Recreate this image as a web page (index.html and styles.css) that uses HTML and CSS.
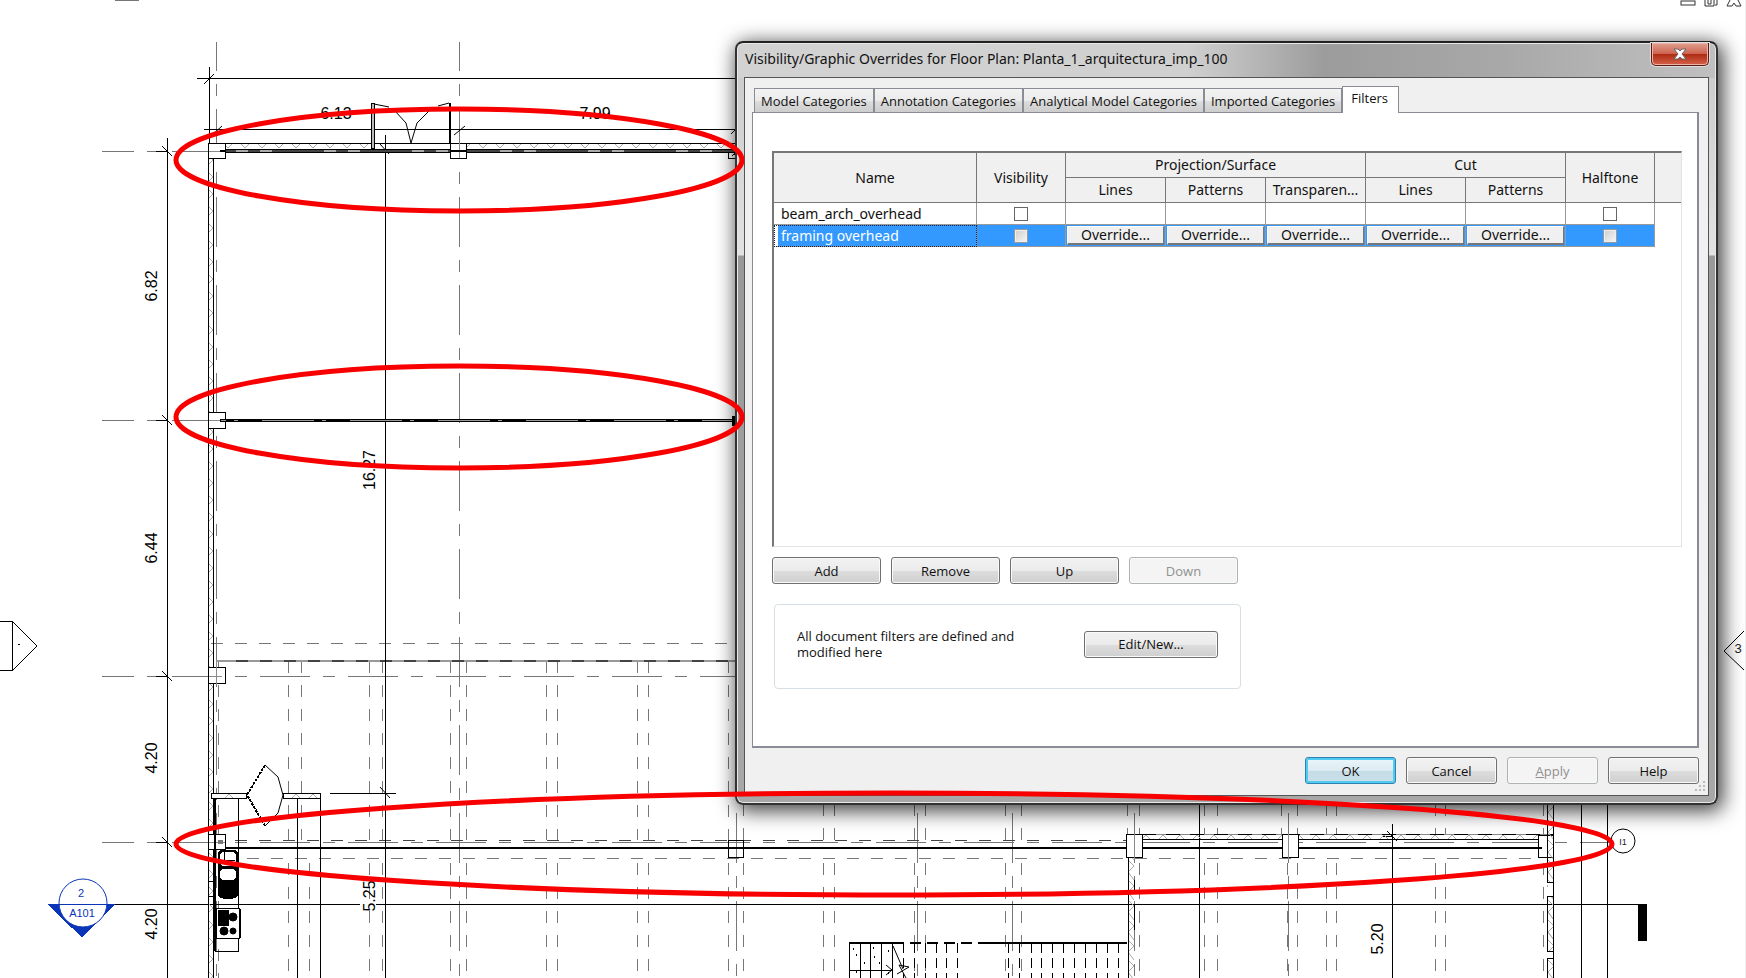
FILE: index.html
```html
<!DOCTYPE html>
<html lang="en">
<head>
    <meta charset="UTF-8">
    <meta name="viewport" content="width=device-width, initial-scale=1.0">
    <title>Visibility/Graphic Overrides</title>
    <link rel="stylesheet" href="styles.css">
</head>
<body>
    <main class="workspace">
        <!-- Floor plan -->
        <svg class="plan" role="img" aria-label="Floor plan">
            <defs>
                <pattern id="hatch-v" width="6" height="17" patternUnits="userSpaceOnUse" x="208" y="0">
                    <path d="M1 3 L5 7 L1 11" class="hatch"/>
                </pattern>
                <pattern id="hatch-h" width="17" height="6" patternUnits="userSpaceOnUse" x="0" y="143">
                    <path d="M3 1 L7 5 L11 1" class="hatch"/>
                </pattern>
                <pattern id="hatch-beam" width="17" height="6" patternUnits="userSpaceOnUse" x="0" y="834">
                    <path d="M3 5 L7 1 L11 5" class="hatch"/>
                </pattern>
                <pattern id="hatch-zig" width="6" height="20" patternUnits="userSpaceOnUse" x="1128" y="0">
                    <path d="M0 0 L6 6 L0 12 L6 20" class="hatch"/>
                </pattern>
            </defs>

            <!-- grid lines -->
            <g class="grid">
                <path class="solid" d="M115 .5H139"/>
                <path class="grid-v" d="M216.5 42V978 M459.5 42V978"/>
                <path class="grid-v2" d="M736.5 813V978 M917.5 813V978 M1012.5 813V978 M1134.5 813V978 M1288.5 813V978"/>
                <path class="grid-h" d="M102 151.5H222 M102 420.5H222 M102 676.5H736 M102 842.5H1612"/>
            </g>

            <!-- beams below, dashed -->
            <g class="dashed">
                <path d="M211 643.5H736"/>
                <path d="M288.5 661V840 M301.5 661V840 M369.5 661V840 M382.5 661V840 M450.5 661V840 M466.5 661V840 M546.5 661V840 M557.5 661V840 M637.5 661V840 M648.5 661V840 M728.5 661V840 M218.5 661V978"/>
                <path d="M743.5 804V840 M823.5 804V840 M834.5 804V840 M914.5 804V840 M925.5 804V840 M1005.5 804V840 M1021.5 804V840 M1127.5 804V840 M1139.5 804V840 M1204.5 804V834 M1217.5 804V834 M1281.5 804V834 M1297.5 804V834 M1326.5 804V834 M1336.5 804V834 M1435.5 804V834 M1445.5 804V834 M1543.5 804V834"/>
                <path class="lower" d="M288.5 858V978 M309.5 858V978 M369.5 858V978 M382.5 858V978 M450.5 858V978 M466.5 858V978 M546.5 858V978 M557.5 858V978 M637.5 858V978 M648.5 858V978 M728.5 858V978 M743.5 858V978 M823.5 858V978 M834.5 858V978 M914.5 858V978 M925.5 858V978 M1005.5 858V978 M1021.5 858V978 M1139.5 858V978 M1204.5 858V978 M1217.5 858V978 M1287.5 858V978 M1297.5 858V978 M1326.5 858V978 M1336.5 858V978 M1435.5 858V978 M1445.5 858V978 M1543.5 858V978"/>
                <path d="M223 858.5H1538"/>
                <path d="M235 840.5H1126" class="dark"/>
            </g>
            <path class="grid-solid" d="M216 661H736"/>
            <path class="dash-dark" d="M236 661H736"/>

            <!-- dimension lines -->
            <g class="line">
                <path d="M167.5 138V978 M197 78.5H736 M204 129.5H736 M209.5 67V144 M385.5 135V978 M330 793.5H396"/>
                <path d="M156 151.5H168 M156 420.5H168 M156 676.5H168 M156 842.5H168"/>
                <path d="M1392.5 824V978 M1382 836.5H1393 M1199.5 803V978 M1581.5 803V978 M1607.5 803V978"/>
                <path d="M115 904.5H1639"/>
            </g>
            <g class="tick">
                <path d="M162 146L172 156 M162 415L172 425 M162 671L172 681 M162 837L172 847"/>
                <path d="M204 84L214 74 M212 135L222 126 M454 135L465 126 M731 134L736 129 M380 144L389 154 M380 787L390 798 M1387 831L1397 841"/>
            </g>

            <!-- outer walls -->
            <g class="line">
                <rect x="208" y="158" width="6" height="820" fill="url(#hatch-v)" stroke="none"/>
                <path d="M208.5 143V978 M213.5 158V978"/>
                <rect x="226" y="143" width="146" height="6" fill="url(#hatch-h)" stroke="none"/>
                <rect x="467" y="143" width="262" height="6" fill="url(#hatch-h)" stroke="none"/>
                <path d="M208 143.5H736"/>
                <rect x="225.5" y="149.5" width="511" height="3" class="beam"/>
                <path class="beam-mid" d="M236 151H736"/>
                <rect x="208.5" y="143.5" width="17" height="15" class="column"/>
                <rect x="450.5" y="143.5" width="16" height="15" class="column"/>
                <path d="M728.5 152V158.5H736 M732 156L736 153" />
                <path d="M459.5 143V158 M209 151.5H222" class="gray"/>
                <path d="M450 151H467 M220 151H226" class="thick"/>
            </g>

            <!-- double door -->
            <g class="line">
                <rect x="371.5" y="103.5" width="3" height="45" fill="#bbb"/>
                <path d="M450 103V144" class="thick"/>
                <path class="arc" d="M374 104L389 107 M395 111L406 123L411 143L417 123L429 111 M438 106L449 103"/>
            </g>

            <!-- middle beam -->
            <g class="line">
                <rect x="208.5" y="412.5" width="17" height="16" class="column"/>
                <path d="M209 420.5H222" class="gray"/>
                <rect x="220.5" y="419.5" width="516" height="2" class="beam-light"/>
                <path class="beam-dash" d="M226 420.5H736"/>
                <rect x="732" y="416" width="4" height="9" class="fill"/>
                <rect x="208.5" y="667.5" width="17" height="16" class="column"/>
                <path d="M209 676.5H222 M216.5 661V684" class="gray"/>
                <rect x="208.5" y="834.5" width="17" height="15" class="column"/>
                <path d="M209 842.5H225" class="gray"/>
                <rect x="218" y="840" width="5" height="4" fill="#777" stroke="none"/>
            </g>

            <!-- lower beam -->
            <g class="line">
                <path d="M225 848H1126 M1142 848H1542" class="thick"/>
                <path d="M728 840.5H744 M728.5 840V858 M743.5 840V858 M728 857.5H744"/>
                <rect x="1142" y="834" width="396" height="6" fill="url(#hatch-beam)" stroke="none"/>
                <path d="M1142 834.5H1553" class="gray"/>
                <path d="M1142 834.5H1553" class="long-dash"/>
                <path d="M1142 839.5H1538"/>
                <rect x="1126.5" y="834.5" width="16" height="23" class="column"/>
                <rect x="1282.5" y="834.5" width="16" height="23" class="column"/>
                <rect x="1538.5" y="835.5" width="15" height="22" class="column"/>
                <path d="M1288.5 834V860 M1134.5 834V860" class="gray"/>
                <path d="M1538 848H1542" class="thick"/>
                <rect x="1128" y="858" width="6" height="120" fill="url(#hatch-zig)" stroke="none"/>
                <path d="M1128.5 858V978 M1134.5 880V890 M1134.5 905V930"/>
                <rect x="1547" y="803" width="6" height="175" fill="url(#hatch-zig)" stroke="none"/>
                <path d="M1547.5 803V882.5H1553 M1547.5 978V958.5H1553 M1553.5 803V978"/>
                <rect x="1547.5" y="896.5" width="6" height="55" fill="url(#hatch-zig)"/>
                <rect x="1548" y="883" width="5" height="13" class="blank"/>
                <rect x="1548" y="952" width="5" height="6" class="blank"/>
            </g>
            <rect x="1638" y="904" width="9" height="37" class="fill"/>

            <!-- stair -->
            <g class="line">
                <path d="M849 943H893 M988 943H1127" class="thick"/>
                <path d="M893 943H988" class="thick stair-dash"/>
                <path d="M849.5 943V978 M860.5 943V978 M870.5 943V978 M881.5 943V978 M892.5 943V978 M849 970.5H892"/>
                <path class="tick" d="M886 965L892 970L886 975 M893 946L903 969 M897 974L909 967L899 965L906 978"/>
                <path class="stair-v" d="M903.5 943V978 M914.5 943V978 M925.5 943V978 M936.5 943V978 M946.5 943V978 M957.5 943V978 M1008.5 943V978 M1019.5 943V978 M1031.5 943V978 M1041.5 943V978 M1052.5 943V978 M1063.5 943V978 M1074.5 943V978 M1085.5 943V978 M1096.5 943V978 M1107.5 943V978 M1118.5 943V978"/>
                <path class="dots" d="M853 949h1M856 955h1M864 963h1M856 972h1M873 948h1M874 957h1M888 951h1M879 963h1M888 973h1"/>
            </g>

            <!-- kitchen -->
            <g class="line">
                <path d="M238.5 798V951.5H215 M297.5 798V978 M320.5 793V978"/>
                <path d="M215 798V951" class="thick"/>
                <rect x="211.5" y="793.5" width="35" height="5" fill="#fff"/>
                <rect x="283.5" y="793.5" width="37" height="5" fill="#fff"/>
                <path class="hatch" d="M225 798L229 794L233 798 M292 798L296 794L300 798 M309 798L313 794L317 798"/>
                <path class="swing thick" d="M265 765L247 795L265 826"/>
                <path class="arc" d="M265 765L278 777L283 795L278 813L265 826"/>
                <rect x="218" y="850" width="20" height="48" rx="5" class="fill"/>
                <rect x="220" y="852" width="16" height="14" rx="4" fill="#fff" stroke="none"/>
                <rect x="220" y="869" width="16" height="11" rx="4" fill="#fff" stroke="none"/>
                <path d="M222 860.5H235 M224.5 852V864"/>
                <rect x="216.5" y="908.5" width="23" height="30" fill="#fff"/>
                <path d="M240 909V938" class="thick"/>
                <rect x="218" y="910" width="10" height="15" class="fill"/>
                <circle cx="233" cy="917" r="4" class="fill"/>
                <circle cx="224" cy="931" r="4" class="fill"/>
                <circle cx="233" cy="931" r="3" class="fill"/>
                <path d="M209 849.5H214 M209 881.5H214 M209 896.5H214"/>
            </g>

            <!-- dimension texts -->
            <g class="dim">
                <text x="336" y="119">6.13</text>
                <text x="595" y="119">7.99</text>
                <text transform="translate(157 286) rotate(-90)">6.82</text>
                <text transform="translate(157 548) rotate(-90)">6.44</text>
                <text transform="translate(157 758) rotate(-90)">4.20</text>
                <text transform="translate(157 924) rotate(-90)">4.20</text>
                <text transform="translate(375 470) rotate(-90)">16.27</text>
                <rect x="360" y="902" width="16" height="5" class="blank"/>
                <text transform="translate(375 896) rotate(-90)">5.25</text>
                <text transform="translate(1383 939) rotate(-90)">5.20</text>
            </g>

            <!-- view markers -->
            <g class="marker">
                <path d="M0 621.5H12.5V670.5H0 M12 621L37 646L12 671 M18 644.5h2"/>
                <path d="M1744 631L1724 651L1744 670"/>
                <text x="1738" y="653" class="elevation">3</text>
                <circle cx="1623" cy="841" r="12" fill="#fff"/>
                <text x="1623" y="845" class="bubble">I1</text>
            </g>
            <g class="section">
                <path d="M48 904H115L82 937Z" class="section-fill"/>
                <circle cx="83" cy="903" r="24"/>
                <path d="M48 904H115"/>
                <text x="81" y="897">2</text>
                <text x="82" y="917">A101</text>
            </g>
        </svg>

        <div class="mdi-controls">
            <button type="button" aria-label="Minimize">
                <svg width="16" height="7"><rect x="1" y="1" width="14" height="4"/></svg>
            </button>
            <button type="button" aria-label="Restore">
                <svg width="16" height="7"><path d="M2 0V6H11V0 M5 0V4H8V0 M12 5H14V0"/></svg>
            </button>
            <button type="button" aria-label="Close">
                <svg width="16" height="7"><path d="M4 0L1 6H6L8 3L10 6H15L12 0"/></svg>
            </button>
        </div>

        <section class="dialog" role="dialog" aria-labelledby="dialog-title">
            <header class="title-bar">
                <h1 id="dialog-title">Visibility/Graphic Overrides for Floor Plan: Planta_1_arquitectura_imp_100</h1>
                <button type="button" class="close" aria-label="Close dialog">
                    <svg width="14" height="12" viewBox="0 0 14 12"><path d="M1 1H5L7 3L9 1H13L9 6L13 11H9L7 9L5 11H1L5 6Z"/></svg>
                </button>
            </header>

            <div class="dialog-body">
                <div class="tabs" role="tablist">
                    <button type="button" role="tab" class="tab">Model Categories</button>
                    <button type="button" role="tab" class="tab">Annotation Categories</button>
                    <button type="button" role="tab" class="tab">Analytical Model Categories</button>
                    <button type="button" role="tab" class="tab">Imported Categories</button>
                    <button type="button" role="tab" class="tab active" aria-selected="true">Filters</button>
                </div>

                <div class="tab-page" role="tabpanel">
                    <div class="table-frame">
                        <table>
                            <colgroup>
                                <col class="col-name">
                                <col class="col-check">
                                <col class="col-override" span="5">
                                <col class="col-check">
                                <col>
                            </colgroup>
                            <thead>
                                <tr>
                                    <th rowspan="2">Name</th>
                                    <th rowspan="2">Visibility</th>
                                    <th colspan="3">Projection/Surface</th>
                                    <th colspan="2">Cut</th>
                                    <th rowspan="2">Halftone</th>
                                    <td rowspan="2" class="rest"></td>
                                </tr>
                                <tr>
                                    <th>Lines</th>
                                    <th>Patterns</th>
                                    <th>Transparen...</th>
                                    <th>Lines</th>
                                    <th>Patterns</th>
                                </tr>
                            </thead>
                            <tbody>
                                <tr>
                                    <td class="name">beam_arch_overhead</td>
                                    <td><input type="checkbox" aria-label="beam_arch_overhead visibility"></td>
                                    <td></td>
                                    <td></td>
                                    <td></td>
                                    <td></td>
                                    <td></td>
                                    <td><input type="checkbox" aria-label="beam_arch_overhead halftone"></td>
                                    <td class="rest"></td>
                                </tr>
                                <tr class="selected">
                                    <td class="name">framing overhead</td>
                                    <td><input type="checkbox" aria-label="framing overhead visibility"></td>
                                    <td><button type="button" class="override">Override...</button></td>
                                    <td><button type="button" class="override">Override...</button></td>
                                    <td><button type="button" class="override">Override...</button></td>
                                    <td><button type="button" class="override">Override...</button></td>
                                    <td><button type="button" class="override">Override...</button></td>
                                    <td><input type="checkbox" aria-label="framing overhead halftone"></td>
                                    <td class="rest"></td>
                                </tr>
                            </tbody>
                        </table>
                    </div>

                    <div class="list-actions">
                        <button type="button" class="btn">Add</button>
                        <button type="button" class="btn">Remove</button>
                        <button type="button" class="btn">Up</button>
                        <button type="button" class="btn" disabled>Down</button>
                    </div>

                    <div class="group">
                        <p>All document filters are defined and modified here</p>
                        <button type="button" class="btn">Edit/New...</button>
                    </div>
                </div>

                <footer class="dialog-actions">
                    <button type="button" class="btn default">OK</button>
                    <button type="button" class="btn">Cancel</button>
                    <button type="button" class="btn" disabled><u>A</u>pply</button>
                    <button type="button" class="btn">Help</button>
                </footer>
                <svg class="grip" width="12" height="12"><path d="M9 1h2M5 5h2M9 5h2M1 9h2M5 9h2M9 9h2"/></svg>
            </div>
        </section>

        <!-- red highlights over the plan and the dialog -->
        <svg class="highlights" aria-hidden="true">
            <ellipse cx="459" cy="160" rx="283" ry="51"/>
            <ellipse cx="459" cy="417" rx="283" ry="51"/>
            <ellipse cx="894" cy="844" rx="718" ry="51"/>
        </svg>
    </main>
</body>
</html>
```
FILE: styles.css
```css
* {
    box-sizing: border-box;
}
body {
    margin: 0;
    background: #fff;
    color: #111;
    font-family: "Open Sans", "Noto Sans", sans-serif;
    font-size: 13px;
}
button {
    font: inherit;
    color: inherit;
}
.workspace {
    position: relative;
    height: 100vh;
    overflow: hidden;
    border-right: 1px solid #eee;
}
.plan, .highlights {
    position: absolute;
    inset: 0;
    width: 100%;
    height: 100%;
}
.highlights {
    pointer-events: none;
}
.highlights ellipse {
    fill: none;
    stroke: #f80000;
    stroke-width: 5;
}

/* floor plan */
.plan path, .plan rect {
    shape-rendering: crispEdges;
}
.grid, .dashed, .line, .marker, .tick {
    fill: none;
    stroke: #000;
}
.grid, .dashed {
    stroke: #777;
}
.grid-v {
    stroke-dasharray: 50 13 12 13;
    stroke-dashoffset: 21;
}
.grid-v2 {
    stroke-dasharray: 50 13 12 13;
}
.grid-h {
    stroke-dasharray: 50 13 12 13;
    stroke-dashoffset: 18;
}
.dashed path {
    stroke-dasharray: 12 12;
}
.dashed .lower {
    stroke-dasharray: 12 12;
    stroke-dashoffset: 19;
}
.dashed .dark {
    stroke: #444;
}
.grid-solid {
    stroke: #999;
    stroke-width: 2;
}
.dash-dark {
    stroke: #444;
    stroke-width: 2;
    stroke-dasharray: 12 12;
}
.line .gray {
    stroke: #8a8a8a;
}
.plan .thick {
    stroke-width: 2;
}
.plan .tick path, .plan path.tick, .plan .arc {
    shape-rendering: auto;
}
.plan .hatch {
    fill: none;
    stroke: #aaa;
    shape-rendering: auto;
}
.swing {
    stroke-dasharray: 3 1;
}
.column {
    fill: #fff;
}
.beam {
    fill: #444;
}
.beam-mid {
    stroke: #aaa;
    stroke-width: 2;
    stroke-dasharray: 12 12 12 52;
}
.beam-light {
    fill: #999;
}
.beam-dash {
    stroke-width: 2;
    stroke-dasharray: 8 4 24 52;
}
.fill {
    fill: #000;
}
.blank {
    fill: #fff;
    stroke: none;
}
.long-dash {
    stroke-dasharray: 14 10;
}
.stair-dash {
    stroke-dasharray: 11 6;
}
.stair-v {
    stroke-dasharray: 10 5;
}
.dots {
    stroke-width: 2;
}
.dim text {
    font: 16px "Liberation Sans", Arial, sans-serif;
    text-anchor: middle;
}
.marker text {
    fill: #222;
    stroke: none;
    font-family: "Liberation Sans", Arial, sans-serif;
    text-anchor: middle;
}
.marker .elevation {
    font-size: 13px;
}
.marker .bubble {
    font-size: 9px;
}
.plan .marker path {
    shape-rendering: auto;
}
.section {
    fill: none;
    stroke: #0a35b8;
}
.section-fill {
    fill: #0a35b8;
}
.section circle {
    fill: #fff;
}
.section text {
    fill: #0a35b8;
    stroke: none;
    font: 11px "Liberation Sans", Arial, sans-serif;
    text-anchor: middle;
}

/* window controls of the drawing */
.mdi-controls {
    position: absolute;
    top: 0;
    right: 3px;
    display: flex;
    gap: 7px;
}
.mdi-controls button {
    display: flex;
    padding: 0;
    border: 0;
    background: none;
}
.mdi-controls svg {
    fill: #fff;
    stroke: #333;
    stroke-width: 1;
}

/* dialog */
.dialog {
    position: absolute;
    top: 41px;
    left: 735px;
    right: 27px;
    display: flex;
    flex-direction: column;
    padding: 0 7px 7px;
    border: 2px solid #333;
    border-top-color: #222;
    border-radius: 8px;
    background:
        linear-gradient(90deg, #d2d2d2 0%, #d0d0d0 46%, #9c9c9c 60%, #a8a8a8 78%, #c0c0c0 100%) top / 100% 35px no-repeat,
        linear-gradient(#c8c8c8, #e2e2e2 212px, #999 213px, #a8a8a8);
    box-shadow: inset 0 0 0 1px #e8e8e8, 3px 4px 20px 2px rgba(0, 0, 0, 0.75);
}
.title-bar {
    display: flex;
    justify-content: space-between;
    align-items: flex-start;
    height: 34px;
}
.title-bar h1 {
    margin: 0;
    padding-left: 1px;
    font-family: "Noto Sans", sans-serif;
    font-size: 14px;
    font-weight: normal;
    line-height: 32px;
}
.close {
    display: flex;
    justify-content: center;
    align-items: center;
    width: 58px;
    height: 23px;
    padding: 0;
    border: 1px solid #5c1a12;
    border-top: 0;
    border-radius: 0 0 5px 5px;
    background: linear-gradient(#e0a090, #cd6450 48%, #b02c14 52%, #d4624c);
    box-shadow: inset 0 0 0 1px #eab5a8, 0 0 0 1px #ddd;
}
.close svg {
    fill: #fff;
    stroke: #666;
}
.dialog-body {
    position: relative;
    display: flex;
    flex-direction: column;
    padding: 8px 9px 11px 7px;
    border: 1px solid #555;
    background: #f0f0f0;
}
.tabs {
    display: flex;
    align-items: flex-end;
    padding-left: 2px;
}
.tab {
    height: 24px;
    padding: 0 6px;
    border: 1px solid #898c95;
    border-bottom: 0;
    background: linear-gradient(#f3f3f3, #ebebeb 50%, #dddddd 51%, #cdcdcd);
    white-space: nowrap;
}
.tab.active {
    height: 27px;
    margin-bottom: -1px;
    padding: 0 10px 4px 8px;
    background: #fff;
    z-index: 1;
}
.tab-page {
    padding: 38px 15px 57px 19px;
    border: 1px solid #898c95;
    border-right-width: 2px;
    border-bottom-width: 2px;
    background: #fff;
}
.table-frame {
    height: 396px;
    border: 2px solid #777;
    border-right: 1px solid #e3e3e3;
    border-bottom: 1px solid #e3e3e3;
}
table {
    width: 100%;
    table-layout: fixed;
    border-collapse: separate;
    border-spacing: 0;
    font-family: "Noto Sans", sans-serif;
}
.col-name {
    width: 203px;
}
.col-check {
    width: 89px;
}
.col-override {
    width: 100px;
}
th, td {
    padding: 0;
    border-right: 1px solid #999;
    border-bottom: 1px solid #999;
    text-align: center;
    font-size: 14px;
    font-weight: normal;
}
thead th, thead td {
    height: 25px;
    border-color: #777;
    background: #f0f0f0;
    line-height: 24px;
}
tbody td {
    height: 22px;
    line-height: 20px;
}
td.rest {
    border-right: 0;
}
tbody td.rest {
    border-bottom: 0;
}
td.name {
    padding-left: 7px;
    text-align: left;
}
.selected td {
    background: #3399ff;
    color: #fff;
}
.selected td.rest {
    background: none;
}
.selected td.name {
    padding-left: 3px;
    border-left: 4px solid #fff;
    outline: 1px dotted #124;
    outline-offset: -1px;
}
input[type="checkbox"] {
    appearance: none;
    display: block;
    width: 14px;
    height: 14px;
    margin: 0 auto;
    border: 1px solid #666;
    background: #fff;
}
.selected input[type="checkbox"] {
    border-color: #999;
    background: linear-gradient(135deg, #ccc, #f8f8f8);
    box-shadow: inset 0 0 0 1px #eee;
}
.override {
    display: block;
    width: 97px;
    height: 19px;
    margin: 0 auto;
    padding: 0;
    border: 1px solid #fff;
    border-right-color: #777;
    border-bottom: 2px solid #777;
    background: #f0f0f0;
    color: #111;
    line-height: 16px;
}
.list-actions {
    display: flex;
    gap: 10px;
    margin-top: 10px;
}
.btn {
    width: 91px;
    height: 27px;
    padding: 0;
    border: 1px solid #707070;
    border-radius: 3px;
    background: linear-gradient(#f2f2f2, #ebebeb 50%, #dddddd 51%, #cfcfcf);
    box-shadow: inset 0 0 0 1px #fafafa;
}
.btn.default {
    border-color: #2c83ad;
    background: linear-gradient(#eaf6fb, #dcebf2 50%, #c5dbe5 51%, #c9e0ea);
    box-shadow: inset 0 0 0 2px #52c9f0;
}
.btn:disabled {
    border-color: #adb2b5;
    background: #f4f4f4;
    color: #909090;
}
.list-actions .btn {
    width: 109px;
}
.group {
    display: flex;
    align-items: center;
    justify-content: space-between;
    width: 467px;
    height: 85px;
    margin: 20px 0 0 2px;
    padding: 0 22px 5px;
    border: 1px solid #d5dfe5;
    border-radius: 4px;
}
.group p {
    width: 230px;
    margin: 0;
    line-height: 16px;
}
.group .btn {
    width: 134px;
}
.dialog-actions {
    display: flex;
    justify-content: flex-end;
    gap: 10px;
    margin-top: 9px;
}
.grip {
    position: absolute;
    right: 2px;
    bottom: 2px;
    fill: none;
    stroke: #bbb;
    stroke-width: 2;
}
```
